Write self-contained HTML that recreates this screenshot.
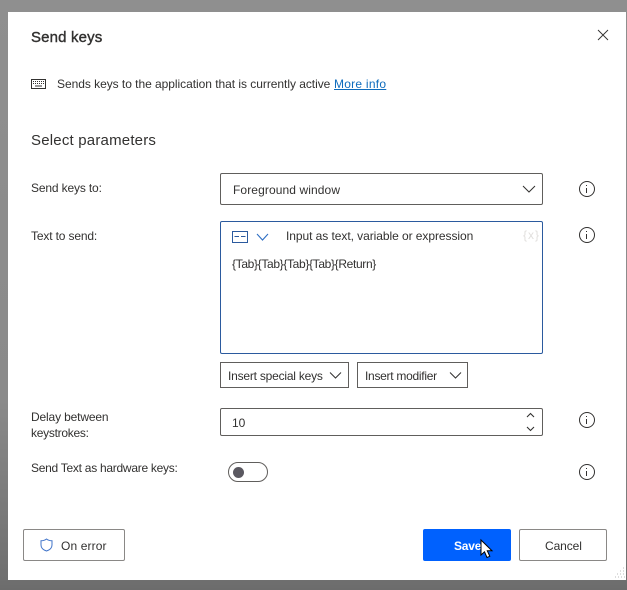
<!DOCTYPE html>
<html>
<head>
<meta charset="utf-8">
<style>
html,body{margin:0;padding:0;width:627px;height:590px;overflow:hidden;background:linear-gradient(#8f8f8f 0,#8a8a8a 400px,#6f6f6f 580px,#6c6c6c 590px);font-family:"Liberation Sans",sans-serif;color:#323130}
.t{position:absolute;white-space:nowrap;font-size:12px;line-height:16px}
.b{position:absolute;box-sizing:border-box;border:1px solid #8a8886;background:#fff}
svg{position:absolute;overflow:visible}
.i{width:16px;height:16px;border:1px solid #323130;border-radius:50%;box-sizing:border-box;position:absolute}
.i:after{content:"";position:absolute;left:6px;top:6px;width:1px;height:5px;background:#323130}
.i:before{content:"";position:absolute;left:6px;top:3px;width:1px;height:1px;background:#323130}
</style>
</head>
<body>
<div style="position:absolute;left:8px;top:12px;width:618px;height:568px;background:#fff"></div>

<div class="t" style="left:31px;top:29px;font-size:15px;font-weight:normal;-webkit-text-stroke:.4px #323130;line-height:18px;color:#323130;letter-spacing:.15px">Send keys</div>
<svg style="left:597px;top:29px" width="12" height="12" viewBox="0 0 12 12"><path d="M1 1L11 11M11 1L1 11" stroke="#323130" stroke-width=".9" fill="none"/></svg>

<svg style="left:31px;top:79px" width="15" height="10" viewBox="0 0 15 10"><rect x=".5" y=".5" width="14" height="9" fill="none" stroke="#323130"/><path d="M2 2.500h11M2 4.500h11" stroke="#323130" stroke-dasharray="1 1" fill="none"/><path d="M4 7h7" stroke="#323130"/></svg>
<div class="t" style="left:57px;top:76px;letter-spacing:-.04px">Sends keys to the application that is currently active</div>
<div class="t" style="left:334px;top:76px;color:#0f6cbd;text-decoration:underline;letter-spacing:.25px">More info</div>

<div class="t" style="left:31px;top:131px;font-size:15px;line-height:20px;letter-spacing:.2px">Select parameters</div>

<div class="t" style="left:31px;top:180px;letter-spacing:-.15px">Send keys to:</div>
<div class="b" style="left:220px;top:173px;width:323px;height:32px;border-radius:2px;border-color:#605e5c"></div>
<div class="t" style="left:233px;top:182px;letter-spacing:.1px">Foreground window</div>
<svg style="left:522px;top:185px" width="14" height="8" viewBox="0 0 14 8"><path d="M1 1L7 7L13 1" stroke="#323130" stroke-width="1" fill="none"/></svg>
<div class="i" style="left:579px;top:181px"></div>

<div class="t" style="left:31px;top:228px;letter-spacing:-.15px">Text to send:</div>
<div class="b" style="left:220px;top:221px;width:323px;height:133px;border-color:#2b5a9e;border-radius:2px"></div>
<svg style="left:232px;top:231px" width="16" height="12" viewBox="0 0 16 12"><rect x=".5" y=".5" width="15" height="11" fill="none" stroke="#2b5a9e"/><path d="M2.500 5.500h4.500M9 5.500h4.500" stroke="#2b5a9e" fill="none"/></svg>
<svg style="left:256px;top:233px" width="13" height="8" viewBox="0 0 13 8"><path d="M1 1L6.500 7L12 1" stroke="#2f6fc4" stroke-width="1.100" fill="none"/></svg>
<div class="t" style="left:286px;top:228px;letter-spacing:-.06px">Input as text, variable or expression</div>
<div class="t" style="left:523px;top:227px;color:#e1dfdd;letter-spacing:1px">{x}</div>
<div class="t" style="left:232px;top:256px;letter-spacing:-.34px">{Tab}{Tab}{Tab}{Tab}{Return}</div>
<div class="i" style="left:579px;top:227px"></div>

<div class="b" style="left:220px;top:362px;width:129px;height:26px;border-color:#605e5c"></div>
<div class="t" style="left:228px;top:368px;letter-spacing:-.21px">Insert special keys</div>
<svg style="left:329px;top:372px" width="13" height="7" viewBox="0 0 13 7"><path d="M1 .5L6.500 6L12 .5" stroke="#323130" fill="none"/></svg>
<div class="b" style="left:357px;top:362px;width:111px;height:26px;border-color:#605e5c"></div>
<div class="t" style="left:365px;top:368px;letter-spacing:-.28px">Insert modifier</div>
<svg style="left:449px;top:372px" width="13" height="7" viewBox="0 0 13 7"><path d="M1 .5L6.500 6L12 .5" stroke="#323130" fill="none"/></svg>

<div class="t" style="left:31px;top:409px;letter-spacing:-.15px">Delay between</div>
<div class="t" style="left:31px;top:425px;letter-spacing:-.27px">keystrokes:</div>
<div class="b" style="left:220px;top:408px;width:323px;height:28px;border-radius:2px;border-color:#605e5c"></div>
<div class="t" style="left:232px;top:415px;">10</div>
<svg style="left:526px;top:412px" width="9" height="20" viewBox="0 0 9 20"><path d="M1 5L4.500 1.500L8 5M1 15L4.500 18.500L8 15" stroke="#323130" stroke-width="1.100" fill="none"/></svg>
<div class="i" style="left:579px;top:412px"></div>

<div class="t" style="left:31px;top:460px;letter-spacing:-.27px">Send Text as hardware keys:</div>
<div class="b" style="left:228px;top:462px;width:40px;height:20px;border-radius:10px;border-color:#605e5c"></div>
<div style="position:absolute;left:233px;top:467px;width:11px;height:11px;border-radius:50%;background:#5a5860"></div>
<div class="i" style="left:579px;top:464px"></div>

<div class="b" style="left:23px;top:529px;width:102px;height:32px;border-radius:2px"></div>
<svg style="left:40px;top:538px" width="13" height="14" viewBox="0 0 13 14"><path d="M6.500 1C8 2.200 10 2.800 12 2.800V7C12 10 9.500 12 6.500 13C3.500 12 1 10 1 7V2.800C3 2.800 5 2.200 6.500 1Z" fill="none" stroke="#3f73c9" stroke-width="1"/></svg>
<div class="t" style="left:61px;top:538px;letter-spacing:.12px">On error</div>

<div style="position:absolute;left:423px;top:529px;width:88px;height:32px;background:#0061fe;border-radius:2px"></div>
<div class="t" style="left:454px;top:538px;color:#fff;font-weight:bold;letter-spacing:-.2px">Save</div>
<svg style="left:480px;top:539px" width="14" height="20" viewBox="0 0 14 20"><path d="M1 1V16L4.500 12.800L7 18.500L9.800 17.300L7.300 11.800H12Z" fill="#fff" stroke="#000" stroke-width="1"/></svg>
<div class="b" style="left:519px;top:529px;width:88px;height:32px;border-radius:2px"></div>
<div class="t" style="left:545px;top:538px;letter-spacing:-.1px">Cancel</div>
<svg style="left:614px;top:567px" width="11" height="11" viewBox="0 0 11 11"><path d="M9 1h1M6 4h1M9 4h1M3 7h1M6 7h1M9 7h1M1 10h1M4 10h1M7 10h1M10 10h1" stroke="#bbb" stroke-width="1" fill="none"/></svg>
</body>
</html>
